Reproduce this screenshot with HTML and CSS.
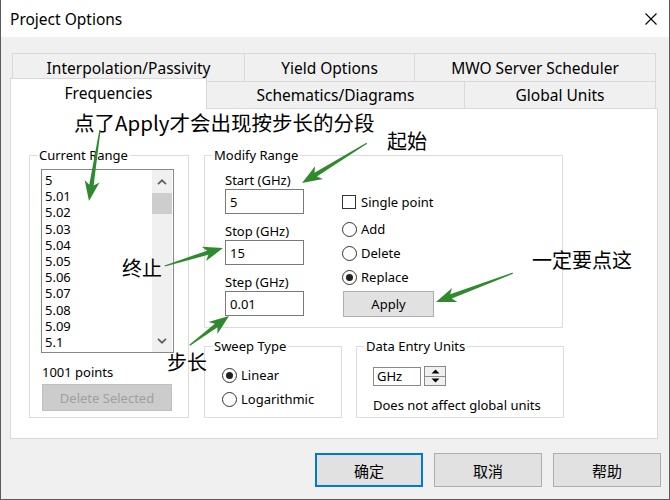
FILE: index.html
```html
<!DOCTYPE html>
<html>
<head>
<meta charset="utf-8">
<link rel="stylesheet" href="styles.css">
</head>
<body>
<div class="window">
  <div class="titlebar">
    <span class="title">Project Options</span>
    <svg class="close" width="12" height="12" viewBox="0 0 12 12"><path d="M0.5 0.5L11.5 11.5M11.5 0.5L0.5 11.5" stroke="#000" stroke-width="1.1" fill="none"/></svg>
  </div>
  <div class="client">
    <div class="tabctl">
      <div class="tabrow back">
        <div class="tab w1">Interpolation/Passivity</div>
        <div class="tab w2">Yield Options</div>
        <div class="tab w3">MWO Server Scheduler</div>
      </div>
      <div class="tabrow front">
        <div class="tab sel">Frequencies</div>
        <div class="tab w5">Schematics/Diagrams</div>
        <div class="tab w6">Global Units</div>
      </div>
      <div class="panel">
        <fieldset class="grp current">
          <legend>Current Range</legend>
          <div class="body-current">
            <div class="listbox">
              <ul class="items">
                <li>5</li><li>5.01</li><li>5.02</li><li>5.03</li><li>5.04</li><li>5.05</li>
                <li>5.06</li><li>5.07</li><li>5.08</li><li>5.09</li><li>5.1</li>
              </ul>
              <div class="vscroll">
                <div class="sbtn"><svg width="10" height="6" viewBox="0 0 10 6"><polyline points="1,5.2 5,1.3 9,5.2" fill="none" stroke="#606060" stroke-width="1.7"/></svg></div>
                <div class="thumb"></div>
                <div class="track"></div>
                <div class="sbtn"><svg width="10" height="6" viewBox="0 0 10 6"><polyline points="1,0.8 5,4.7 9,0.8" fill="none" stroke="#606060" stroke-width="1.7"/></svg></div>
              </div>
            </div>
            <div class="count">1001 points</div>
            <div class="btn disabled">Delete Selected</div>
          </div>
        </fieldset>
        <div class="rightcol">
          <fieldset class="grp modify">
            <legend>Modify Range</legend>
            <div class="body-modify">
              <div class="fields">
                <div class="flabel">Start (GHz)</div>
                <div class="edit">5</div>
                <div class="flabel">Stop (GHz)</div>
                <div class="edit">15</div>
                <div class="flabel">Step (GHz)</div>
                <div class="edit">0.01</div>
              </div>
              <div class="options">
                <div class="opt first"><span class="check"></span><span class="otext">Single point</span></div>
                <div class="opt"><span class="radio"></span><span class="otext">Add</span></div>
                <div class="opt"><span class="radio"></span><span class="otext">Delete</span></div>
                <div class="opt"><span class="radio on"></span><span class="otext">Replace</span></div>
                <div class="btn apply">Apply</div>
              </div>
            </div>
          </fieldset>
          <div class="lower">
            <fieldset class="grp sweep">
              <legend>Sweep Type</legend>
              <div class="body-sweep">
                <div class="opt"><span class="radio on"></span><span class="otext">Linear</span></div>
                <div class="opt"><span class="radio"></span><span class="otext">Logarithmic</span></div>
              </div>
            </fieldset>
            <fieldset class="grp units">
              <legend>Data Entry Units</legend>
              <div class="body-units">
                <div class="unitrow">
                  <div class="unitbox">GHz</div>
                  <div class="spin">
                    <div class="half"><svg width="9" height="5" viewBox="0 0 9 5"><polygon points="0.5,4.5 4.5,0.5 8.5,4.5" fill="#000"/></svg></div>
                    <div class="half lowhalf"><svg width="9" height="5" viewBox="0 0 9 5"><polygon points="0.5,0.5 4.5,4.5 8.5,0.5" fill="#000"/></svg></div>
                  </div>
                </div>
                <div class="note">Does not affect global units</div>
              </div>
            </fieldset>
          </div>
        </div>
      </div>
    </div>
    <div class="buttons">
      <div class="dbtn default">确定</div>
      <div class="dbtn">取消</div>
      <div class="dbtn">帮助</div>
    </div>
  </div>

  <div class="annot">
    <svg class="arrows" width="670" height="500" viewBox="0 0 670 500">
      <g fill="#2f8a2f">
        <path transform="translate(89 201) rotate(98.8)" d="M0 0 L-20 -7.5 L-16 -2.2 L-72 -0.6 L-72 0.6 L-16 2.2 L-20 7.5 Z"/>
        <path transform="translate(302 183) rotate(148.4)" d="M0 0 L-20 -7.5 L-16 -2.2 L-76 -0.6 L-76 0.6 L-16 2.2 L-20 7.5 Z"/>
        <path transform="translate(223 248) rotate(-17.2)" d="M0 0 L-20 -7.5 L-16 -2.2 L-61 -0.6 L-61 0.6 L-16 2.2 L-20 7.5 Z"/>
        <path transform="translate(229 316) rotate(-36.6)" d="M0 0 L-20 -7.5 L-16 -2.2 L-49 -0.6 L-49 0.6 L-16 2.2 L-20 7.5 Z"/>
        <path transform="translate(436 302) rotate(159.4)" d="M0 0 L-20 -7.5 L-16 -2.2 L-82 -0.6 L-82 0.6 L-16 2.2 L-20 7.5 Z"/>
      </g>
    </svg>
    <div class="note-text big" style="left:74px;top:109px">点了Apply才会出现按步长的分段</div>
    <div class="note-text" style="left:387px;top:128px">起始</div>
    <div class="note-text" style="left:122px;top:255px">终止</div>
    <div class="note-text" style="left:167px;top:349px">步长</div>
    <div class="note-text" style="left:532px;top:247px">一定要点这</div>
  </div>
</div>
</body>
</html>
```

FILE: styles.css
```css
* { box-sizing: border-box; }
html, body { margin: 0; padding: 0; background: #fff; }
body {
  font-family: "Noto Sans", "Noto Sans CJK SC", sans-serif;
  font-size: 13px;
  color: #000;
}
.window {
  position: relative;
  width: 670px;
  height: 500px;
  border: 1px solid #5b5b5b;
  border-top: none;
  background: #f0f0f0;
  overflow: hidden;
}
.titlebar {
  height: 37px;
  background: #fff;
  display: flex;
  align-items: center;
  padding: 0 12px 0 9px;
}
.title { font-size: 15.5px; }
.close { margin-left: auto; }

.client {
  padding: 16px 8px 0 9px;
  display: flex;
  flex-direction: column;
}
.tabctl { width: 648px; }
.tabrow { display: flex; }
.tabrow.back { margin-left: 2px; height: 29px; }
.tab {
  display: flex;
  align-items: center;
  justify-content: center;
  border: 1px solid #d9d9d9;
  background: #f0f0f0;
  font-size: 15.5px;
  white-space: nowrap;
}
.tab + .tab { margin-left: -1px; }
.tabrow.back .tab { height: 29px; }
.w1 { width: 233px; }
.w2 { width: 171px; }
.w3 { width: 242px; }
.tabrow.front { height: 27px; margin-top: -1px; align-items: flex-end; }
.tabrow.front .tab { height: 27px; border-bottom: none; }
.tabrow.front .tab.sel {
  width: 197px;
  height: 31px;
  margin-bottom: -1px;
  padding-bottom: 2px;
  background: #fff;
  position: relative;
  z-index: 1;
}
.w5 { width: 259px; }
.w6 { width: 192px; }

.panel {
  height: 331px;
  border: 1px solid #d9d9d9;
  background: #fff;
  display: flex;
  padding: 38px 0 0 18px;
}
fieldset.grp {
  margin: 0;
  padding: 0;
  border: 1px solid #dcdcdc;
  min-width: 0;
}
fieldset.grp legend {
  margin-left: 7px;
  padding: 0 2px;
  font-size: 13px;
  line-height: 16px;
}
fieldset.current { width: 160px; height: 271px; margin-right: 15px; flex-shrink: 0; }
.body-current { padding: 6px 0 0 11px; }
.listbox {
  width: 133px;
  height: 184px;
  border: 1px solid #828790;
  display: flex;
  background: #fff;
}
.items {
  list-style: none;
  margin: 0;
  padding: 2px 0 0 3px;
  flex: 1;
  line-height: 16.2px;
  overflow: hidden;
}
.vscroll {
  width: 20px;
  margin-right: 1px;
  background: #f0f0f0;
  display: flex;
  flex-direction: column;
}
.sbtn { height: 23px; display: flex; align-items: center; justify-content: center; }
.thumb { height: 21px; background: #cdcdcd; }
.track { flex: 1; }
.count { margin: 11px 0 0 1px; line-height: 16px; }
.btn {
  display: flex;
  align-items: center;
  justify-content: center;
  background: #e1e1e1;
  border: 1px solid #adadad;
}
.btn.disabled {
  width: 130px;
  height: 27px;
  margin: 4px 0 0 1px;
  background: #cccccc;
  border-color: #bfbfbf;
  color: #a0a0a0;
}

.rightcol { width: 360px; flex-shrink: 0; display: flex; flex-direction: column; gap: 10px; }
fieldset.modify { width: 359px; height: 181px; }
.body-modify { display: flex; padding-left: 20px; }
.fields { width: 79px; padding-top: 9px; display: flex; flex-direction: column; }
.flabel { height: 17px; line-height: 17px; white-space: nowrap; }
.edit {
  height: 25px;
  border: 1px solid #7a7a7a;
  background: #fff;
  padding-left: 4px;
  display: flex;
  align-items: center;
  margin-bottom: 9px;
}
.options { margin-left: 38px; padding-top: 27px; display: flex; flex-direction: column; }
.opt { height: 24px; display: flex; align-items: center; white-space: nowrap; }
.opt.first { margin-bottom: 3px; }
.check {
  width: 14px;
  height: 14px;
  border: 1px solid #333;
  background: #fff;
  margin-right: 5px;
}
.radio {
  width: 15px;
  height: 15px;
  border: 1px solid #333;
  border-radius: 50%;
  background: #fff;
  margin-right: 4px;
  display: flex;
  align-items: center;
  justify-content: center;
}
.radio.on::after {
  content: "";
  width: 7px;
  height: 7px;
  border-radius: 50%;
  background: #222;
}
.btn.apply { width: 91px; height: 26px; margin: 2px 0 0 1px; }

.lower { display: flex; gap: 14px; }
fieldset.sweep { width: 138px; height: 80px; flex-shrink: 0; }
.body-sweep { padding: 9px 0 0 17px; }
fieldset.units { width: 208px; height: 80px; flex-shrink: 0; }
.body-units { padding: 12px 0 0 16px; }
.unitrow { display: flex; align-items: center; }
.unitbox {
  width: 48px;
  height: 19px;
  border: 1px solid #8a8a8a;
  padding-left: 3px;
  display: flex;
  align-items: center;
  background: #fff;
}
.spin {
  width: 22px;
  height: 20px;
  margin-left: 3px;
  border: 1px solid #8a8a8a;
  display: flex;
  flex-direction: column;
  background: #f0f0f0;
}
.half { flex: 1; display: flex; align-items: center; justify-content: center; }
.lowhalf { border-top: 1px solid #8a8a8a; }
.note { margin-top: 11px; line-height: 16px; white-space: nowrap; }

.buttons {
  margin-top: 14px;
  display: flex;
  justify-content: flex-end;
  gap: 11px;
}
.dbtn {
  width: 108px;
  height: 34px;
  background: #e1e1e1;
  border: 1px solid #adadad;
  display: flex;
  align-items: center;
  justify-content: center;
  font-family: "Noto Sans CJK SC", sans-serif;
  font-size: 15px;
}
.dbtn.default { border: 2px solid #0078d7; }

.annot {
  position: absolute;
  left: -1px;
  top: 0;
  width: 670px;
  height: 500px;
  pointer-events: none;
}
.arrows { position: absolute; left: 0; top: 0; }
.note-text {
  position: absolute;
  font-family: "Noto Sans CJK SC", sans-serif;
  font-size: 20px;
  line-height: 26px;
  white-space: nowrap;
  color: #000;
}
.note-text.big { font-size: 20.5px; }
```
